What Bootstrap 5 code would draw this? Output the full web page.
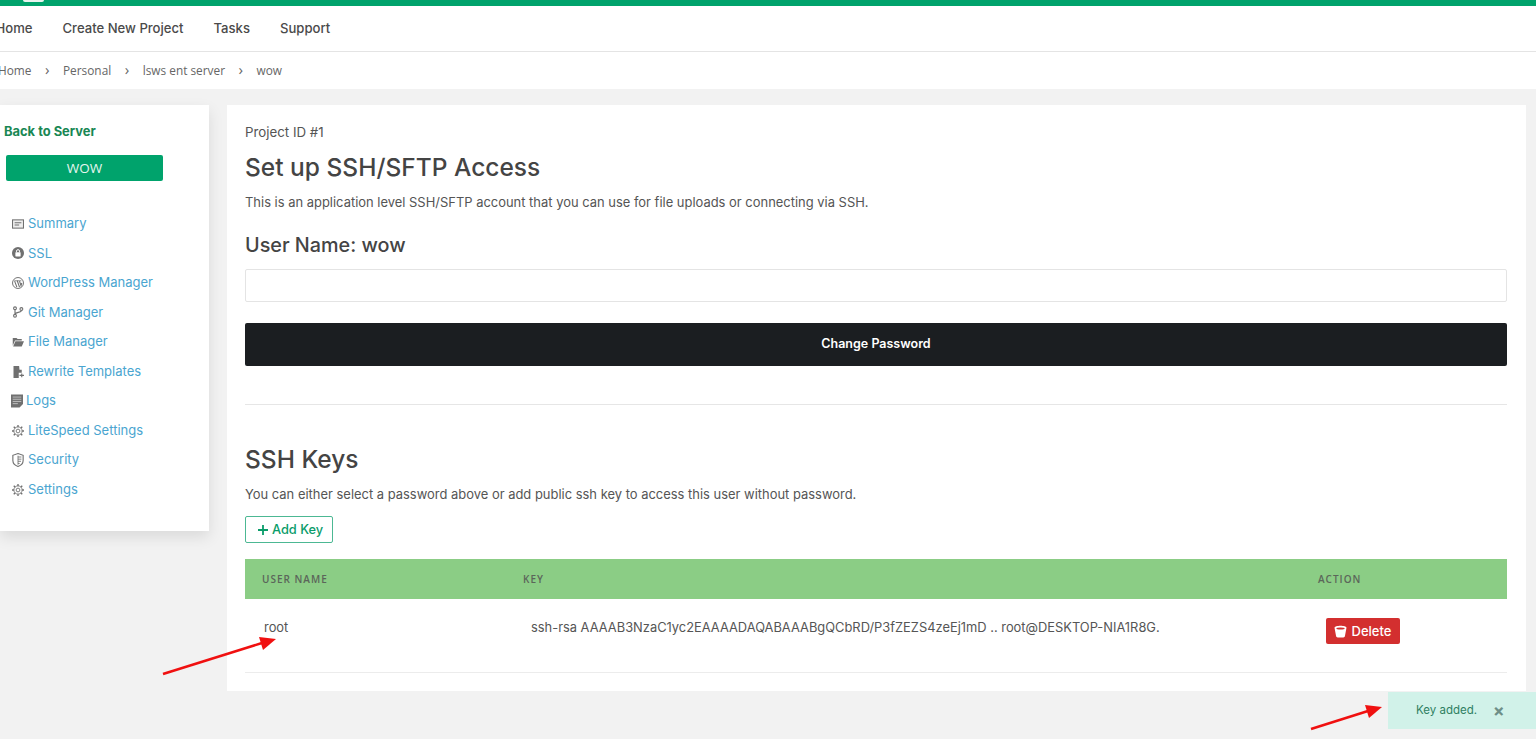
<!DOCTYPE html>
<html lang="en">
<head>
    <meta charset="UTF-8">
    <meta name="viewport" content="width=device-width, initial-scale=1.0">
    <title>Set up SSH/SFTP Access</title>
    <link href="https://cdn.jsdelivr.net/npm/bootstrap@5.3.0/dist/css/bootstrap.min.css" rel="stylesheet">
    <style>
        html, body { height: 739px; overflow: hidden; }
        body { background: #f2f2f2; font-family: Inter, "Liberation Sans", sans-serif; color: #555; font-size: 13px; }
        .top-strip { height: 6px; background: #00a36c; }
        .logo-bit { width: 21px; height: 2px; margin-left: 23px; background: #e8f3ee; border-radius: 0 0 3px 3px; }
        .main-nav { height: 46px; background: #fff; border-bottom: 1px solid #e4e4e4; margin-left: -4.5px; gap: 30px; font-size: 13.1px; font-weight: 500; }
        .main-nav a { color: #4a4a4a; text-decoration: none; }
        .crumbs { height: 37px; background: #fff; font-family: "Open Sans", sans-serif; font-size: 11.85px; color: #666; margin-left: -2px; }
        .crumbs .sep { width: 31.5px; text-align: center; font-size: 15px; line-height: 15px; padding-bottom: 2px; }
        .page-body { padding-top: 16px; padding-right: 10px; gap: 18px; }
        .side-panel { width: 209px; height: 426px; background: #fff; box-shadow: 0 6px 14px rgba(0,0,0,.1); padding: 19px 0 0 4px; flex: none; }
        .side-back { color: #198754; font-weight: 700; font-size: 12.9px; text-decoration: none; display: block; line-height: 15px; }
        .side-name { width: 157px; height: 26px; margin: 16px 0 28px 2px; background: #00a36c; color: #e6f6f0; border-radius: 2px; font-family: "Open Sans", sans-serif; font-size: 13.5px; display: flex; align-items: center; justify-content: center; }
        .side-links a { height: 29.55px; display: flex; align-items: center; gap: 4px; padding-left: 8px; color: #4aa5d0; text-decoration: none; font-size: 13px; }
        .side-links svg { width: 12px; height: 12px; flex: none; color: #707070; }
        .side-links .tall-ico { width: 12px; height: 14px; }
        .main-panel { width: 1299px; height: 586px; background: #fff; padding: 19px 19px 0 18px; }
        .proj-id { font-size: 13.3px; line-height: 17px; }
        .main-title { font-size: 24.5px; font-weight: 500; line-height: 30px; margin: 11px 0 12px; color: #444; }
        .main-note { font-size: 12.94px; line-height: 17px; margin: 0; }
        .user-title { font-size: 19.8px; font-weight: 500; line-height: 24px; margin: 22px 0 12px; color: #444; }
        .pass-field { height: 33px; border: 1px solid #e4e4e4; border-radius: 2px; padding: 0; }
        .pass-btn { height: 43px; margin-top: 21px; background: #1b1e21; color: #fff; font-size: 12.5px; font-weight: 600; border-radius: 2px; border: 0; }
        .rule-line { border-top: 1px solid #e6e6e6; margin: 38px 0 39px; opacity: 1; }
        .keys-title { font-size: 24.5px; font-weight: 500; line-height: 30px; margin: 0 0 12px; color: #444; }
        .add-key { height: 27px; width: 88px; margin-top: 13px; border: 1px solid #4cb893; color: #0a9c6a; font-size: 12.8px; font-weight: 500; border-radius: 2px; padding: 0 0 0 3px; display: flex; align-items: center; justify-content: center; gap: 4px; background: #fff; }
        .keys-head { height: 40px; margin-top: 16px; background: #8bcd85; font-family: "Open Sans", sans-serif; font-size: 10px; font-weight: 600; letter-spacing: 1px; color: #5b665a; }
        .keys-row { height: 74px; border-bottom: 1px solid #ececec; font-size: 12.88px; }
        .col-user { width: 278px; padding-left: 17px; }
        .col-key { width: 795px; }
        .row-user { padding-left: 19px; margin-top: -16px; }
        .row-key { padding-left: 8px; margin-top: -16px; }
        .del-btn { height: 26px; width: 74px; margin-left: 8px; margin-top: -9px; background: #d32f2f; color: #fff; border: 0; border-radius: 2px; font-size: 13px; font-weight: 500; padding: 1px 1px 0 0; display: flex; align-items: center; justify-content: center; gap: 5px; }
        .toast-note { position: absolute; left: 1388px; top: 692px; width: 148px; height: 37px; background: #d1f2e9; color: #2f8062; font-size: 11.5px; display: flex; align-items: center; padding: 1px 0 0 28px; }
        .toast-note b { position: absolute; left: 105px; top: 9px; color: #6e8f88; font-size: 17px; line-height: 20px; font-weight: 700; }
        .shot-arrow { position: absolute; left: 0; top: 0; pointer-events: none; }
    </style>
</head>
<body>

    <div class="top-strip"><div class="logo-bit"></div></div>

    <div class="main-nav d-flex align-items-center">
        <a href="#">Home</a>
        <a href="#">Create New Project</a>
        <a href="#">Tasks</a>
        <a href="#">Support</a>
    </div>

    <div class="crumbs d-flex align-items-center">
        <span>Home</span><span class="sep">&#8250;</span>
        <span>Personal</span><span class="sep">&#8250;</span>
        <span>lsws ent server</span><span class="sep">&#8250;</span>
        <span>wow</span>
    </div>

    <div class="page-body d-flex">
        <div class="side-panel">
            <a href="#" class="side-back">Back to Server</a>
            <div class="side-name">WOW</div>
            <div class="side-links">
                <a href="#"><svg viewBox="0 0 16 16"><rect x=".7" y="2.500" width="14.600" height="11" fill="#eee" stroke="currentColor" stroke-width="1.400"/><path d="M3.500 5.500h9v1.400h-9zM3.500 8.500h6v1.400h-6z" fill="currentColor"/></svg>Summary</a>
                <a href="#"><svg viewBox="0 0 16 16"><circle cx="8" cy="8" r="8" fill="currentColor"/><rect x="4.500" y="7" width="7" height="5.500" rx=".5" fill="#fff"/><path d="M6 7V5.500a2 2 0 0 1 4 0V7" fill="none" stroke="#fff" stroke-width="1.300"/></svg>SSL</a>
                <a href="#"><svg viewBox="0 0 16 16"><circle cx="8" cy="8" r="7.300" fill="none" stroke="currentColor" stroke-width="1.300"/><path d="M3.500 5.500l3 8M7 5l3 8.500M10 5.500l2 6 1-3.500" fill="none" stroke="currentColor" stroke-width="1.500"/><path d="M3 5h5M7.500 5h5" stroke="currentColor"/></svg>WordPress Manager</a>
                <a href="#"><svg viewBox="0 0 16 16"><g fill="none" stroke="currentColor" stroke-width="1.500"><circle cx="4" cy="3" r="1.900"/><circle cx="4" cy="13" r="1.900"/><circle cx="12.500" cy="4" r="1.900"/><path d="M4 5v6M12.500 6c0 3-8.500 2-8.500 5"/></g></svg>Git Manager</a>
                <a href="#"><svg viewBox="0 0 16 16"><path d="M1 2.500h5l1.500 1.500H13V6H4L1 13zM4.500 7H16l-3 7H1.500z" fill="currentColor"/></svg>File Manager</a>
                <a href="#"><svg viewBox="0 0 16 16"><path d="M2 0h7.500l.5 5h3v4H9v7H2z" fill="currentColor"/><path d="M10 12.500h6M13 10v5" stroke="currentColor" stroke-width="1.500"/></svg>Rewrite Templates</a>
                <a href="#" style="padding-left:7px;gap:3px"><svg class="tall-ico" viewBox="0 0 14 16" preserveAspectRatio="none"><path d="M0 .5h14v11l-4 4H0z" fill="currentColor"/><path d="M2 3.500h10M2 6h10M2 8.500h10M2 11h6" stroke="#ddd" stroke-width=".8"/></svg>Logs</a>
                <a href="#"><svg viewBox="0 0 16 16"><g fill="none" stroke="currentColor"><circle cx="8" cy="8" r="2.500" stroke-width="1.200"/><circle cx="8" cy="8" r="5.500" stroke-width="1.200"/><path d="M8 0v2.500M8 13.500V16M0 8h2.500M13.500 8H16M2.300 2.300l1.800 1.800M11.900 11.900l1.800 1.800M13.700 2.300l-1.800 1.800M4.100 11.900l-1.800 1.800" stroke-width="1.800"/></g></svg>LiteSpeed Settings</a>
                <a href="#"><svg class="tall-ico" viewBox="0 0 14 16"><path d="M7 .5l6 2v6c0 3.500-2.700 5.800-6 7-3.300-1.200-6-3.500-6-7v-6z" fill="none" stroke="currentColor" stroke-width="1.300"/><path d="M7 3v10.500M7 4.500h4M7 7h4M7 9.500h3.500M7 12h2" stroke="currentColor"/></svg>Security</a>
                <a href="#"><svg viewBox="0 0 16 16"><g fill="none" stroke="currentColor"><circle cx="8" cy="8" r="2.500" stroke-width="1.200"/><circle cx="8" cy="8" r="5.500" stroke-width="1.200"/><path d="M8 0v2.500M8 13.500V16M0 8h2.500M13.500 8H16M2.300 2.300l1.800 1.800M11.900 11.900l1.800 1.800M13.700 2.300l-1.800 1.800M4.100 11.900l-1.800 1.800" stroke-width="1.800"/></g></svg>Settings</a>
            </div>
        </div>

        <div class="main-panel">
            <div class="proj-id">Project ID #1</div>
            <h2 class="main-title">Set up SSH/SFTP Access</h2>
            <p class="main-note">This is an application level SSH/SFTP account that you can use for file uploads or connecting via SSH.</p>
            <h4 class="user-title">User Name: wow</h4>
            <input type="text" class="form-control pass-field">
            <button type="button" class="btn w-100 pass-btn">Change Password</button>
            <hr class="rule-line">
            <h2 class="keys-title">SSH Keys</h2>
            <p class="main-note">You can either select a password above or add public ssh key to access this user without password.</p>
            <button type="button" class="btn add-key"><svg width="10" height="10" viewBox="0 0 10 10"><path d="M5 0v10M0 5h10" stroke="#0a9c6a" stroke-width="1.800"/></svg>Add Key</button>
            <div class="keys-head d-flex align-items-center">
                <div class="col-user">USER NAME</div>
                <div class="col-key">KEY</div>
                <div>ACTION</div>
            </div>
            <div class="keys-row d-flex align-items-center">
                <div class="col-user row-user">root</div>
                <div class="col-key row-key">ssh-rsa AAAAB3NzaC1yc2EAAAADAQABAAABgQCbRD/P3fZEZS4zeEj1mD .. root@DESKTOP-NIA1R8G.</div>
                <button type="button" class="btn del-btn"><svg width="13" height="13" viewBox="0 0 12 12"><path d="M.5 2.500C.5 0 11.500 0 11.500 2.500L10 10.500c-.3 1.500-7.700 1.500-8 0z" fill="#fff"/><ellipse cx="6" cy="3.200" rx="3.800" ry="1" fill="#d32f2f"/></svg>Delete</button>
            </div>
        </div>
    </div>

    <div class="toast-note">Key added.<b>&times;</b></div>

    <svg class="shot-arrow" width="1536" height="739" viewBox="0 0 1536 739">
        <path d="M163 674L262 643" stroke="#f01010" stroke-width="2.500"/>
        <path d="M276 639L259 637 263 650z" fill="#f01010"/>
        <path d="M1311 729L1368 711" stroke="#f01010" stroke-width="2.500"/>
        <path d="M1382 707L1365 705 1369 718z" fill="#f01010"/>
    </svg>

    <script src="https://cdn.jsdelivr.net/npm/bootstrap@5.3.0/dist/js/bootstrap.bundle.min.js"></script>
</body>
</html>
